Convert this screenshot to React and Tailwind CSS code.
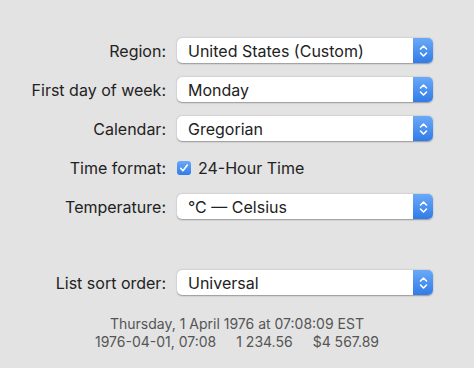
import React from "react";

function Chevrons() {
  return (
    <svg width="9" height="14" viewBox="0 0 9 14" fill="none">
      <path d="M1.5 5 L4.5 2 L7.5 5" stroke="white" strokeWidth="1.6" strokeLinecap="round" strokeLinejoin="round" />
      <path d="M1.5 9 L4.5 12 L7.5 9" stroke="white" strokeWidth="1.6" strokeLinecap="round" strokeLinejoin="round" />
    </svg>
  );
}

function Popup({ value }) {
  return (
    <div className="flex h-[25px] w-[256px] items-stretch rounded-[5px] bg-white shadow-[0_0.5px_1.5px_rgba(0,0,0,0.35)]">
      <div className="flex flex-1 items-center pl-[11px] text-[16px] text-[#222]">{value}</div>
      <div className="flex w-[20px] items-center justify-center rounded-r-[5px] bg-gradient-to-b from-[#6aa9f8] to-[#2f7be8]">
        <Chevrons />
      </div>
    </div>
  );
}

function Row({ label, children }) {
  return (
    <div className="flex h-[25px] items-center">
      <div className="w-[166px] text-right text-[16px] text-[#222]">{label}</div>
      <div className="ml-[11px] flex items-center">{children}</div>
    </div>
  );
}

export default function App() {
  return (
    <div
      className="flex h-[368px] w-[474px] flex-col bg-[#e3e3e3] pt-[38px]"
      style={{ fontFamily: "Inter, 'Liberation Sans', Arial, sans-serif" }}
    >
      <div className="flex flex-col gap-[14px]">
        <Row label="Region:">
          <Popup value="United States (Custom)" />
        </Row>
        <Row label="First day of week:">
          <Popup value="Monday" />
        </Row>
        <Row label="Calendar:">
          <Popup value="Gregorian" />
        </Row>
        <Row label="Time format:">
          <div className="flex items-center gap-[7px]">
            <div className="flex h-[14px] w-[14px] items-center justify-center rounded-[3px] bg-gradient-to-b from-[#6aa9f8] to-[#2f7be8]">
              <svg width="10" height="10" viewBox="0 0 9 9" fill="none">
                <path d="M1.5 4.8 L3.6 7 L7.5 1.8" stroke="white" strokeWidth="1.4" strokeLinecap="round" strokeLinejoin="round" />
              </svg>
            </div>
            <span className="text-[16px] text-[#222]">24-Hour Time</span>
          </div>
        </Row>
        <Row label="Temperature:">
          <Popup value="°C — Celsius" />
        </Row>
      </div>
      <div className="mt-[51px]">
        <Row label="List sort order:">
          <Popup value="Universal" />
        </Row>
      </div>
      <div className="mt-[20px] flex flex-col items-center text-[14px] leading-[18px] text-[#555]">
        <div>Thursday, 1 April 1976 at 07:08:09 EST</div>
        <div className="flex gap-[20px]">
          <span>1976-04-01, 07:08</span>
          <span>1 234.56</span>
          <span>$4 567.89</span>
        </div>
      </div>
    </div>
  );
}
